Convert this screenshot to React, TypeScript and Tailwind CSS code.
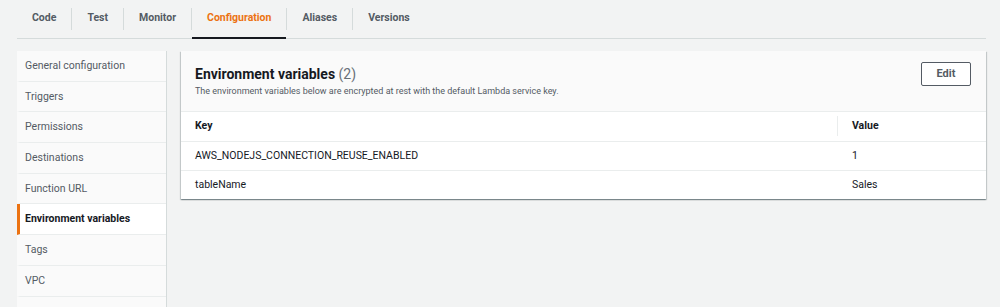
import React from 'react'

const TABS = ['Code', 'Test', 'Monitor', 'Configuration', 'Aliases', 'Versions']
const ACTIVE_TAB = 'Configuration'

const SIDEBAR = [
  'General configuration',
  'Triggers',
  'Permissions',
  'Destinations',
  'Function URL',
  'Environment variables',
  'Tags',
  'VPC',
  '',
]
const ACTIVE_ITEM = 'Environment variables'

const VARS = [
  { key: 'AWS_NODEJS_CONNECTION_REUSE_ENABLED', value: '1' },
  { key: 'tableName', value: 'Sales' },
]

export default function App() {
  return (
    <div className="h-[307px] overflow-hidden bg-[#f2f3f3] pl-[17px] pr-[14px] font-['Roboto',sans-serif] text-[#16191f]">
      {/* Tabs */}
      <div className="flex h-[39px] border-b border-[#d5dbdb]">
        {TABS.map((t, i) => (
          <div key={t} className="flex items-center">
            {i > 0 && <div className="h-[22px] w-px bg-[#d5dbdb]" />}
            <div
              className={`flex h-[39px] items-center px-[15px] pb-[3px] text-[10.5px] font-bold ${
                t === ACTIVE_TAB ? 'border-b-2 border-[#16191f] pt-[2px] text-[#ec7211]' : 'text-[#545b64]'
              }`}
            >
              {t}
            </div>
          </div>
        ))}
      </div>

      <div className="mt-[12px] flex gap-[14px]">
        {/* Sidebar */}
        <div className="w-[150px] shrink-0 border-r border-[#d5dbdb] bg-[#fafafa]">
          {SIDEBAR.map((s, i) => (
            <div
              key={i}
              className={`flex h-[30.7px] items-center border-b border-l-[3px] border-b-[#eaeded] pl-[5px] text-[10.5px] ${
                s === ACTIVE_ITEM
                  ? 'border-l-[#ec7211] bg-white font-bold text-[#16191f]'
                  : 'border-l-transparent text-[#545b64]'
              }`}
            >
              {s}
            </div>
          ))}
        </div>

        {/* Panel */}
        <div className="h-[148px] flex-1 bg-white shadow-[0_1px_1px_rgba(0,28,36,0.3),1px_1px_1px_rgba(0,28,36,0.15),-1px_1px_1px_rgba(0,28,36,0.15)]">
          <div className="flex h-[61px] items-start justify-between border-b border-[#eaeded] bg-[#fafafa] pl-[14px] pr-[15px]">
            <div className="pt-[14px]">
              <div className="text-[14px] font-bold leading-[18px]">
                Environment variables <span className="font-normal text-[#687078]">(2)</span>
              </div>
              <div className="mt-[2px] text-[9px] leading-[12px] text-[#545b64]">
                The environment variables below are encrypted at rest with the default Lambda service key.
              </div>
            </div>
            <button className="mt-[11px] h-[24px] w-[50px] rounded-[2px] border border-[#545b64] bg-white text-[11px] font-bold text-[#545b64]">
              Edit
            </button>
          </div>

          <table className="w-full text-[10.5px]">
            <thead>
              <tr className="h-[29px] border-b border-[#eaeded]">
                <th className="pl-[14px] text-left font-bold">Key</th>
                <th className="w-[149px] text-left font-bold">
                  <div className="flex items-center">
                    <div className="mr-[14px] h-[20px] w-px bg-[#eaeded]" />
                    Value
                  </div>
                </th>
              </tr>
            </thead>
            <tbody>
              {VARS.map((v, i) => (
                <tr key={v.key} className={`h-[29px] ${i < VARS.length - 1 ? 'border-b border-[#eaeded]' : ''}`}>
                  <td className="pl-[14px]">{v.key}</td>
                  <td className="pl-[15px]">{v.value}</td>
                </tr>
              ))}
            </tbody>
          </table>
        </div>
      </div>
    </div>
  )
}
